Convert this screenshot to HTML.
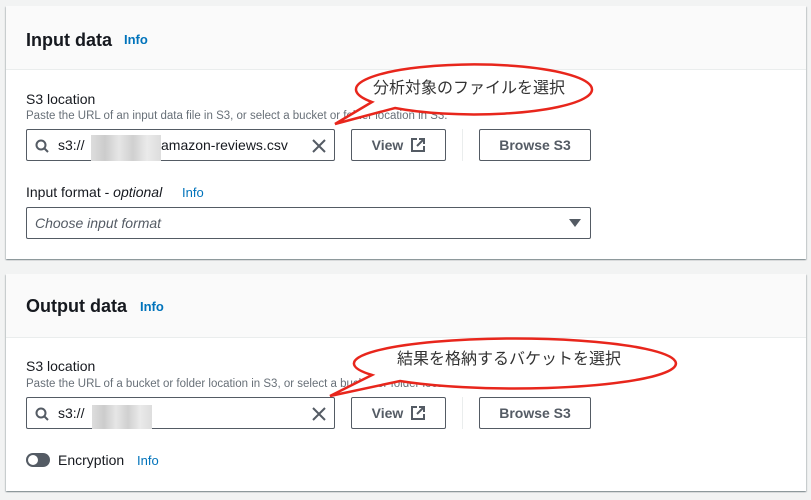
<!DOCTYPE html>
<html><head><meta charset="utf-8"><style>
*{box-sizing:border-box;margin:0;padding:0}
body{width:811px;height:500px;background:#f2f3f3;position:relative;overflow:hidden;font-family:"Liberation Sans","Noto Sans CJK JP",sans-serif;color:#16191f}
.card{position:absolute;left:6px;width:800px;background:#fff;box-shadow:0 1px 1px rgba(0,28,36,.3),1px 1px 1px rgba(0,28,36,.15),-1px 1px 1px rgba(0,28,36,.15)}
.hd{position:absolute;left:0;top:0;width:100%;background:#fafafa;border-bottom:1px solid #eaeded}
.a{position:absolute;white-space:nowrap}
h2{font-size:18px;font-weight:bold}
.info{color:#0073bb;font-size:13px;font-weight:bold}
.lab{font-size:14px}
.desc{font-size:11.5px;color:#687078}
.in{position:absolute;border:1px solid #545b64;border-radius:2px;height:32px;background:#fff}
.btn{position:absolute;border:1px solid #545b64;border-radius:2px;height:32px;font-weight:bold;font-size:14px;color:#545b64;display:flex;align-items:center;justify-content:center;gap:8px}
.sep{position:absolute;width:1px;height:32px;background:#eaeded}
.blur{position:absolute;background:linear-gradient(90deg,#ddd,#ccc 20%,#e6e6e6 40%,#d0d0d0 60%,#eaeaea 80%,#ddd)}
</style></head><body>
<div class="card" style="top:6px;height:253px">
 <div class="hd" style="height:64px"></div>
 <div class="a" style="left:20px;top:24px"><h2>Input data</h2></div>
 <div class="a info" style="left:118px;top:26px">Info</div>
 <div class="a lab" style="left:20px;top:85px">S3 location</div>
 <div class="a desc" style="left:20px;top:104px">Paste the URL of an input data file in S3, or select a bucket or folder location in S3.</div>
 <div class="in" style="left:20px;top:123px;width:309px">
  <svg class="a" style="left:8px;top:9px" width="14" height="14" viewBox="0 0 14 14"><circle cx="6" cy="6" r="4.5" fill="none" stroke="#545b64" stroke-width="2"/><path d="M9.5 9.5L13 13" stroke="#545b64" stroke-width="2"/></svg>
  <div class="a" style="left:31px;top:7px;font-size:14px">s3://</div>
  <div class="blur" style="left:64px;top:5px;width:70px;height:26px"></div>
  <div class="a" style="left:134px;top:7px;font-size:14px">amazon-reviews.csv</div>
  <svg class="a" style="left:285px;top:9px" width="14" height="14"><path d="M1 1L13 13M13 1L1 13" stroke="#545b64" stroke-width="2"/></svg>
 </div>
 <div class="btn" style="left:345px;top:123px;width:95px">View <svg width="14" height="14" viewBox="0 0 14 14"><path d="M6 1H1V13H13V8M8 1H13V6M13 1L6 8" fill="none" stroke="#545b64" stroke-width="2"/></svg></div>
 <div class="sep" style="left:456px;top:123px"></div>
 <div class="btn" style="left:473px;top:123px;width:112px">Browse S3</div>
 <div class="a lab" style="left:20px;top:178px">Input format - <i>optional</i></div>
 <div class="a info" style="left:176px;top:179px;font-weight:normal">Info</div>
 <div class="in" style="left:20px;top:201px;width:565px">
  <div class="a" style="left:8px;top:7px;font-size:14px;font-style:italic;color:#545b64">Choose input format</div>
  <svg class="a" style="left:542px;top:11px" width="12" height="9"><path d="M0 0H12L6 8Z" fill="#545b64"/></svg>
 </div>
</div>
<div class="card" style="top:274px;height:217px">
 <div class="hd" style="height:64px"></div>
 <div class="a" style="left:20px;top:22px"><h2>Output data</h2></div>
 <div class="a info" style="left:134px;top:25px">Info</div>
 <div class="a lab" style="left:20px;top:84px">S3 location</div>
 <div class="a desc" style="left:20px;top:104px">Paste the URL of a bucket or folder location in S3, or select a bucket or folder location in S3.</div>
 <div class="in" style="left:20px;top:123px;width:309px">
  <svg class="a" style="left:8px;top:9px" width="14" height="14" viewBox="0 0 14 14"><circle cx="6" cy="6" r="4.5" fill="none" stroke="#545b64" stroke-width="2"/><path d="M9.5 9.5L13 13" stroke="#545b64" stroke-width="2"/></svg>
  <div class="a" style="left:31px;top:7px;font-size:14px">s3://</div>
  <div class="blur" style="left:65px;top:7px;width:60px;height:24px"></div>
  <svg class="a" style="left:285px;top:9px" width="14" height="14"><path d="M1 1L13 13M13 1L1 13" stroke="#545b64" stroke-width="2"/></svg>
 </div>
 <div class="btn" style="left:345px;top:123px;width:95px">View <svg width="14" height="14" viewBox="0 0 14 14"><path d="M6 1H1V13H13V8M8 1H13V6M13 1L6 8" fill="none" stroke="#545b64" stroke-width="2"/></svg></div>
 <div class="sep" style="left:456px;top:123px"></div>
 <div class="btn" style="left:473px;top:123px;width:112px">Browse S3</div>
 <div class="a" style="left:20px;top:179px;width:24px;height:14px;border-radius:7px;background:#545b64"><div style="position:absolute;left:2px;top:2px;width:10px;height:10px;border-radius:5px;background:#fff"></div></div>
 <div class="a lab" style="left:52px;top:178px">Encryption</div>
 <div class="a info" style="left:131px;top:179px;font-weight:normal">Info</div>
</div>
<svg style="position:absolute;left:0;top:0" width="811" height="500">
 <path d="M372 102 A118 25 0 1 1 395 108 L335 124 Z" fill="#fff" stroke="#e8261c" stroke-width="2.5" stroke-linejoin="miter"/>
 <text x="469" y="93" text-anchor="middle" font-size="16" fill="#333" font-family="Noto Sans CJK JP,sans-serif">分析対象のファイルを選択</text>
 <path d="M372 375 A161 25 0 1 1 400 381 L330 396 Z" fill="#fff" stroke="#e8261c" stroke-width="2.5"/>
 <text x="509" y="364" text-anchor="middle" font-size="16" fill="#333" font-family="Noto Sans CJK JP,sans-serif">結果を格納するバケットを選択</text>
</svg>
</body></html>
